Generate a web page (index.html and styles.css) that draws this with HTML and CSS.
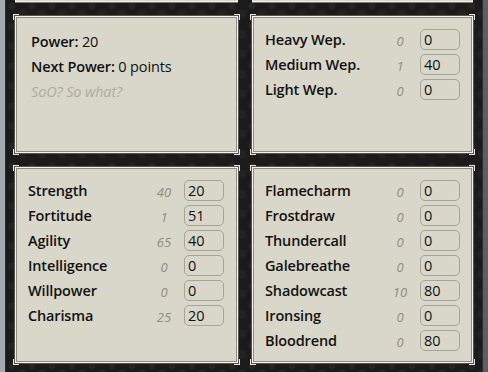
FILE: index.html
```html
<!DOCTYPE html>
<html>
<head>
<meta charset="utf-8">
<link rel="stylesheet" href="styles.css">
</head>
<body>
<div class="page">
  <div class="strip-left"></div>
  <div class="main">
    <div class="stubs">
      <div class="stub"></div>
      <div class="stub"></div>
    </div>
    <div class="grid">
      <div class="panel info">
        <span class="c tl"></span><span class="c tr"></span><span class="c bl"></span><span class="c br"></span>
        <div class="line"><b>Power:</b> 20</div>
        <div class="line"><b>Next Power:</b> 0 points</div>
        <div class="line hint">SoO? So what?</div>
      </div>
      <div class="panel stats right">
        <span class="c tl"></span><span class="c tr"></span><span class="c bl"></span><span class="c br"></span>
        <div class="row"><span class="lbl">Heavy Wep.</span><span class="num">0</span><span class="box">0</span></div>
        <div class="row"><span class="lbl">Medium Wep.</span><span class="num">1</span><span class="box">40</span></div>
        <div class="row"><span class="lbl">Light Wep.</span><span class="num">0</span><span class="box">0</span></div>
      </div>
      <div class="panel stats left">
        <span class="c tl"></span><span class="c tr"></span><span class="c bl"></span><span class="c br"></span>
        <div class="row"><span class="lbl">Strength</span><span class="num">40</span><span class="box">20</span></div>
        <div class="row"><span class="lbl">Fortitude</span><span class="num">1</span><span class="box">51</span></div>
        <div class="row"><span class="lbl">Agility</span><span class="num">65</span><span class="box">40</span></div>
        <div class="row"><span class="lbl">Intelligence</span><span class="num">0</span><span class="box">0</span></div>
        <div class="row"><span class="lbl">Willpower</span><span class="num">0</span><span class="box">0</span></div>
        <div class="row"><span class="lbl">Charisma</span><span class="num">25</span><span class="box">20</span></div>
      </div>
      <div class="panel stats right">
        <span class="c tl"></span><span class="c tr"></span><span class="c bl"></span><span class="c br"></span>
        <div class="row"><span class="lbl">Flamecharm</span><span class="num">0</span><span class="box">0</span></div>
        <div class="row"><span class="lbl">Frostdraw</span><span class="num">0</span><span class="box">0</span></div>
        <div class="row"><span class="lbl">Thundercall</span><span class="num">0</span><span class="box">0</span></div>
        <div class="row"><span class="lbl">Galebreathe</span><span class="num">0</span><span class="box">0</span></div>
        <div class="row"><span class="lbl">Shadowcast</span><span class="num">10</span><span class="box">80</span></div>
        <div class="row"><span class="lbl">Ironsing</span><span class="num">0</span><span class="box">0</span></div>
        <div class="row"><span class="lbl">Bloodrend</span><span class="num">0</span><span class="box">80</span></div>
      </div>
    </div>
  </div>
  <div class="strip-right"></div>
</div>
</body>
</html>
```
FILE: styles.css
```css
html, body {
  margin: 0;
  padding: 0;
  height: 372px;
  overflow: hidden;
}
body {
  font-family: "Open Sans", "Noto Sans", sans-serif;
  font-size: 14.5px;
  letter-spacing: -0.15px;
  color: #121212;
  background: #1d1d1d;
}
.page {
  display: flex;
  height: 372px;
}
.strip-left {
  width: 5px;
  background: #a7a9b0;
  border-right: 1px solid #2a2a2a;
}
.strip-right {
  width: 5px;
  background: #5e5e60;
  border-left: 1px solid #2a2a2a;
}
.main {
  flex: 1;
  padding: 0 9px 0 9px;
  background-color: #1b1b1b;
  background-image:
    radial-gradient(circle at 6px 6px, rgba(255,255,255,0.045) 0 3px, transparent 4px),
    radial-gradient(circle at 16px 14px, rgba(255,255,255,0.03) 0 4px, transparent 5px);
  background-size: 20px 20px, 20px 20px;
}
.stubs {
  display: grid;
  grid-template-columns: 223px 221px;
  column-gap: 14px;
  height: 3px;
  margin-bottom: 13px;
}
.stub {
  background: #d9d7c9;
  border: 1px solid #f2f0ea;
  border-top: none;
  box-shadow: 0 1px 0 #7c7a72;
  height: 1px;
}
.grid {
  display: grid;
  grid-template-columns: 223px 221px;
  grid-template-rows: 137px 196px;
  gap: 14px;
}
.panel {
  position: relative;
  background: #d9d7c9;
  border: 1px solid #f3f1ea;
  box-shadow: inset 0 0 0 1px #8f8d84, 0 0 0 1px #55534e;
  box-sizing: border-box;
}
.c {
  position: absolute;
  width: 5px;
  height: 5px;
  border: 0 solid #e6e4dc;
}
.c.tl { top: -3px; left: -3px; border-top-width: 1px; border-left-width: 1px; }
.c.tr { top: -3px; right: -3px; border-top-width: 1px; border-right-width: 1px; }
.c.bl { bottom: -3px; left: -3px; border-bottom-width: 1px; border-left-width: 1px; }
.c.br { bottom: -3px; right: -3px; border-bottom-width: 1px; border-right-width: 1px; }
.info {
  padding: 12px 14px 0 15px;
}
.line {
  height: 25px;
  line-height: 25px;
  white-space: nowrap;
}
.line b {
  font-weight: 600;
}
.hint {
  font-style: italic;
  color: #aeac9f;
}
.stats {
  padding-top: 10px;
}
.stats.left {
  padding-left: 12px;
  padding-right: 13px;
}
.stats.right {
  padding-left: 12px;
  padding-right: 12px;
}
.row {
  display: grid;
  grid-template-columns: 1fr 30px 40px;
  column-gap: 5px;
  align-items: center;
  height: 25px;
}
.lbl {
  font-weight: 600;
  white-space: nowrap;
}
.num {
  font-style: italic;
  color: #8f8d82;
  text-align: center;
  font-size: 13px;
  letter-spacing: 0;
  padding-top: 3px;
}
.box {
  height: 21px;
  box-sizing: border-box;
  border: 1px solid #a6a497;
  border-radius: 5px;
  padding-left: 3px;
  line-height: 19px;
  background: #d9d7ca;
}
```
